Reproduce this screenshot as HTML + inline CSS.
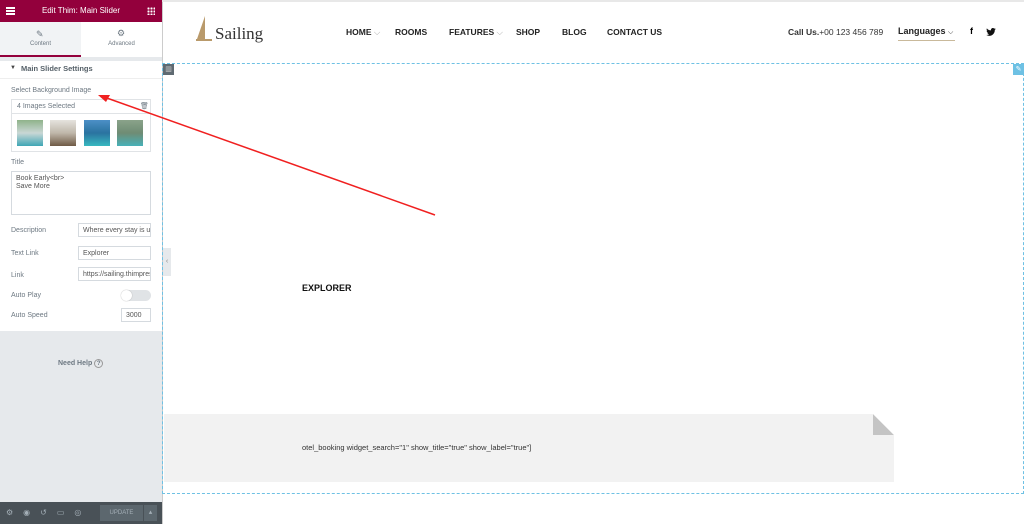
<!DOCTYPE html>
<html><head><meta charset="utf-8"><style>
*{box-sizing:border-box;margin:0;padding:0}
body{width:1024px;height:524px;overflow:hidden;font-family:"Liberation Sans",Arial,sans-serif;background:#fff;position:relative}
.abs{position:absolute}
.sb{left:0;top:0;width:162px;height:524px;background:#fff}
.lbl{font-size:7px;color:#6d7882;position:absolute}
.inp{position:absolute;border:1px solid #d5dadf;background:#fff;font-size:7px;color:#555;padding:3px 4px;white-space:nowrap;overflow:hidden}
.nav{position:absolute;top:27px;font-size:8.5px;font-weight:bold;color:#222}
</style></head><body>
<div class="abs sb">
 <div class="abs" style="left:0;top:0;width:162px;height:22px;background:#93003c;color:#fff;font-size:8px;text-align:center;line-height:22px">Edit Thim: Main Slider</div>
 <div class="abs" style="left:6px;top:7px;width:9px;height:8px;border-top:2px solid #fff;border-bottom:2px solid #fff"><div style="margin-top:1px;height:2px;background:#fff"></div></div>
 <div class="abs" style="left:147px;top:7px;width:8px;height:8px;background:radial-gradient(circle,#fff 1px,transparent 1.2px) 0 0/3px 3px"></div>
 <div class="abs" style="left:0;top:22px;width:81px;height:35px;background:#f1f3f5;border-bottom:2px solid #93003c"></div>
 <div class="abs" style="left:36px;top:29px;font-size:9px;color:#6d7882">✎</div>
 <div class="abs" style="left:0;top:41px;width:81px;text-align:center;font-size:6px;color:#6d7882">Content</div>
 <div class="abs" style="left:117px;top:28px;font-size:9px;color:#6d7882">⚙</div>
 <div class="abs" style="left:81px;top:41px;width:81px;text-align:center;font-size:6px;color:#6d7882">Advanced</div>
 <div class="abs" style="left:0;top:57px;width:162px;height:4px;background:#e6e9ec"></div>
 <div class="abs" style="left:0;top:78px;width:162px;height:1px;background:#eee"></div>
 <div class="abs" style="left:10px;top:65px;font-size:6px;color:#444">▼</div>
 <div class="abs" style="left:21px;top:64px;font-size:7.5px;font-weight:bold;color:#556068">Main Slider Settings</div>
 <div class="lbl" style="left:11px;top:87px">Select Background Image</div>
 <div class="abs" style="left:11px;top:99px;width:140px;height:53px;border:1px solid #e0e3e6"></div>
 <div class="abs" style="left:11px;top:99px;width:140px;height:15px;border-bottom:1px solid #e0e3e6"></div>
 <div class="lbl" style="left:17px;top:103px">4 Images Selected</div>
 <div class="lbl" style="left:140px;top:102px">🗑</div>
 <div class="abs" style="left:17px;top:120px;width:26px;height:26px;background:linear-gradient(#8fb38a,#c9d7d5 50%,#3fa6b5)"></div>
 <div class="abs" style="left:50px;top:120px;width:26px;height:26px;background:linear-gradient(#e5e3de,#bfb7aa 50%,#6f5a45)"></div>
 <div class="abs" style="left:84px;top:120px;width:26px;height:26px;background:linear-gradient(#4c8fc6,#2a73a0 50%,#37b8c0)"></div>
 <div class="abs" style="left:117px;top:120px;width:26px;height:26px;background:linear-gradient(#8aa38a,#6f8c74 50%,#47b1b8)"></div>
 <div class="lbl" style="left:11px;top:159px">Title</div>
 <div class="inp" style="left:11px;top:171px;width:140px;height:44px;line-height:8px;white-space:normal">Book Early&lt;br&gt;<br>Save More</div>
 <div class="lbl" style="left:11px;top:227px">Description</div>
 <div class="inp" style="left:78px;top:223px;width:73px;height:14px">Where every stay is un</div>
 <div class="lbl" style="left:11px;top:250px">Text Link</div>
 <div class="inp" style="left:78px;top:246px;width:73px;height:14px">Explorer</div>
 <div class="lbl" style="left:11px;top:272px">Link</div>
 <div class="inp" style="left:78px;top:267px;width:73px;height:14px">https://sailing.thimpress</div>
 <div class="lbl" style="left:11px;top:292px">Auto Play</div>
 <div class="abs" style="left:121px;top:290px;width:30px;height:11px;border-radius:6px;background:#e0e3e6"><div style="width:11px;height:11px;border-radius:50%;background:#fff;box-shadow:0 0 1px #999"></div></div>
 <div class="lbl" style="left:11px;top:312px">Auto Speed</div>
 <div class="inp" style="left:121px;top:308px;width:30px;height:14px">3000</div>
 <div class="abs" style="left:0;top:331px;width:162px;height:171px;background:#e6e9ec"></div>
 <div class="abs" style="left:58px;top:359px;font-size:7px;color:#6d7882;font-weight:bold">Need Help <span style="display:inline-block;width:9px;height:9px;border:1px solid #999;border-radius:50%;font-size:6px;text-align:center;line-height:8px">?</span></div>
 <div class="abs" style="left:0;top:502px;width:162px;height:22px;background:#495157"></div>
 <div class="abs" style="left:6px;top:508px;font-size:8px;color:#a4afb7;letter-spacing:10px">⚙◉↺▭◎</div>
 <div class="abs" style="left:100px;top:505px;width:43px;height:16px;background:#5c676e;color:#a4afb7;font-size:6px;text-align:center;line-height:16px">UPDATE</div>
 <div class="abs" style="left:144px;top:505px;width:13px;height:16px;background:#5c676e;color:#a4afb7;font-size:7px;text-align:center;line-height:16px">▴</div>
</div>
<div class="abs" style="left:162px;top:0;width:1px;height:524px;background:#ccc"></div>
<div class="abs" style="left:163px;top:248px;width:8px;height:28px;background:#e6e9ec;font-size:7px;color:#888;line-height:28px;text-align:center">‹</div>
<div class="abs" style="left:162px;top:0;width:862px;height:2px;background:#e8e8e8"></div>
<svg class="abs" style="left:195px;top:15px" width="18" height="28"><polygon points="10,1 10,24 2,24" fill="#b99a6b"/><rect x="1" y="24" width="16" height="2" fill="#b99a6b"/></svg>
<div class="abs" style="left:215px;top:24px;font-family:'Liberation Serif',serif;font-size:17px;color:#333">Sailing</div>
<div class="nav" style="left:346px">HOME <span style="color:#aaa;font-weight:normal">⌵</span></div>
<div class="nav" style="left:395px">ROOMS</div>
<div class="nav" style="left:449px">FEATURES <span style="color:#aaa;font-weight:normal">⌵</span></div>
<div class="nav" style="left:516px">SHOP</div>
<div class="nav" style="left:562px">BLOG</div>
<div class="nav" style="left:607px">CONTACT US</div>
<div class="abs" style="left:788px;top:27px;font-size:8.5px;color:#333"><b>Call Us.</b>+00 123 456 789</div>
<div class="abs" style="left:898px;top:26px;font-size:9px;font-weight:bold;color:#222;border-bottom:1px solid #c9b99b;padding-bottom:3px;width:57px">Languages <span style="font-weight:normal;font-size:7px">⌵</span></div>
<div class="abs" style="left:970px;top:26px;font-size:9px;font-weight:bold">f</div>
<svg class="abs" style="left:986px;top:28px" width="10" height="8" viewBox="0 0 24 20"><path d="M24 2.4c-.9.4-1.8.7-2.8.8 1-.6 1.8-1.6 2.2-2.7-1 .6-2 1-3.1 1.2C19.3.7 18 0 16.6 0c-2.7 0-4.9 2.2-4.9 4.9 0 .4 0 .8.1 1.1C7.7 5.8 4.1 3.9 1.7.9c-.4.7-.7 1.6-.7 2.5 0 1.7.9 3.2 2.2 4.1-.8 0-1.6-.2-2.2-.6v.1c0 2.4 1.7 4.4 3.9 4.8-.4.1-.8.2-1.3.2-.3 0-.6 0-.9-.1.6 2 2.4 3.4 4.6 3.4-1.7 1.3-3.8 2.1-6.1 2.1-.4 0-.8 0-1.2-.1C2.2 18.8 4.8 19.6 7.5 19.6c9.1 0 14-7.5 14-14v-.6c1-.7 1.8-1.6 2.5-2.6z" fill="#111"/></svg>
<div class="abs" style="left:162px;top:63px;width:862px;height:431px;border:1px dashed #6ec1e4"></div>
<div class="abs" style="left:163px;top:64px;width:11px;height:11px;background:#5f6a72;color:#ccc;font-size:7px;text-align:center;line-height:11px">▥</div>
<div class="abs" style="left:1013px;top:64px;width:11px;height:11px;background:#6ec1e4;color:#fff;font-size:7px;text-align:center;line-height:11px">✎</div>
<div class="abs" style="left:302px;top:283px;font-size:9px;font-weight:bold;color:#111">EXPLORER</div>
<div class="abs" style="left:164px;top:414px;width:730px;height:68px;background:#f2f2f2"></div>
<svg class="abs" style="left:873px;top:414px" width="21" height="21"><polygon points="0,0 21,21 0,21" fill="#c4c4c4"/><polygon points="0,0 21,0 21,21" fill="#fff"/></svg>
<div class="abs" style="left:302px;top:443px;font-size:7.5px;color:#333">otel_booking widget_search="1" show_title="true" show_label="true"]</div>
<svg class="abs" style="left:0;top:0" width="1024" height="524"><line x1="435" y1="215" x2="104" y2="97" stroke="#f02020" stroke-width="1.5"/><polygon points="98,95 110,95 106,102" fill="#f02020"/></svg>
</body></html>
